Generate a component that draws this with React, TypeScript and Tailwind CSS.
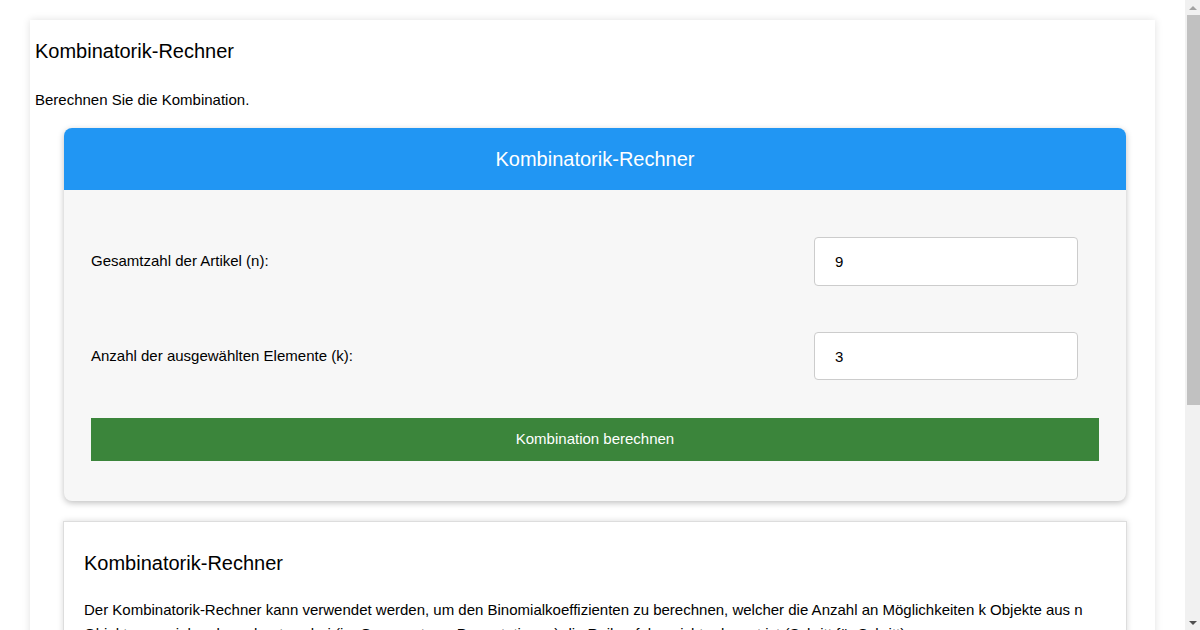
function Scrollbar() {
  return (
    <div className="flex h-[630px] w-[15px] shrink-0 flex-col items-center bg-[#f1f1f1]">
      <div className="flex h-[15px] w-full items-center justify-center">
        <div className="h-0 w-0 border-x-[4px] border-b-[4px] border-x-transparent border-b-[#a3a3a3]" />
      </div>
      <div className="ml-[2px] h-[390px] w-[13px] self-start bg-[#c1c1c1]" />
      <div className="flex-1" />
      <div className="flex h-[15px] w-full items-center justify-center">
        <div className="h-0 w-0 border-x-[4px] border-t-[4px] border-x-transparent border-t-[#505050]" />
      </div>
    </div>
  )
}

export default function App() {
  return (
    <div className="flex h-[630px] overflow-hidden bg-white font-['Liberation_Sans',Arial,sans-serif] text-black">
      <main className="h-[630px] flex-1 overflow-hidden">
        <div className="mx-auto mt-5 w-[1125px] bg-white pb-10 shadow-[0_0_8px_rgba(0,0,0,0.12)]">
          <h1 className="px-[5px] pt-[17px] text-[20px] leading-[28px]">Kombinatorik-Rechner</h1>
          <p className="mt-[25px] px-[5px] text-[15px] leading-[20px]">Berechnen Sie die Kombination.</p>

          <div className="mt-[18px] ml-[34px] w-[1062px] overflow-hidden rounded-lg bg-[#f7f7f7] shadow-[0_2px_6px_rgba(0,0,0,0.25)]">
            <div className="flex h-[62px] items-center justify-center bg-[#2196f3] text-[20px] text-white">
              Kombinatorik-Rechner
            </div>
            <div className="px-[27px] pt-[47px] pb-[40px]">
              <div className="flex items-center justify-between pr-[21px]">
                <label className="text-[15px]">Gesamtzahl der Artikel (n):</label>
                <input
                  defaultValue="9"
                  className="h-[49px] w-[264px] rounded border border-[#ccc] bg-white px-5 text-[15px] outline-none"
                />
              </div>
              <div className="mt-[46px] flex items-center justify-between pr-[21px]">
                <label className="text-[15px]">Anzahl der ausgewählten Elemente (k):</label>
                <input
                  defaultValue="3"
                  className="h-[48px] w-[264px] rounded border border-[#ccc] bg-white px-5 text-[15px] outline-none"
                />
              </div>
              <button className="mt-[38px] flex h-[43px] w-full items-center justify-center bg-[#3b853b] text-[15px] text-white">
                Kombination berechnen
              </button>
            </div>
          </div>

          <div className="mt-5 ml-[33px] w-[1064px] border border-[#ddd] bg-white px-[20px] pt-[27px] pb-6 shadow-[0_0_6px_rgba(0,0,0,0.15)]">
            <h2 className="text-[20px] leading-[28px]">Kombinatorik-Rechner</h2>
            <p className="mt-[21px] text-[15px] leading-[24px]">
              Der Kombinatorik-Rechner kann verwendet werden, um den Binomialkoeffizienten zu berechnen, welcher die Anzahl an Möglichkeiten k Objekte aus n Objekten zu ziehen berechnet, wobei (im Gegensatz zu Permutationen) die Reihenfolge nicht relevant ist (Schritt für Schritt).
            </p>
          </div>
        </div>
      </main>
      <Scrollbar />
    </div>
  )
}
